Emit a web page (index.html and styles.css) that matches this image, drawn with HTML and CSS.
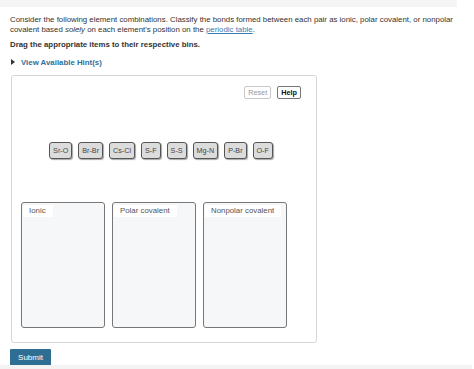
FILE: index.html
```html
<!DOCTYPE html>
<html lang="en">
<head>
    <meta charset="UTF-8">
    <title>Classify the bonds</title>
    <link rel="stylesheet" href="styles.css">
</head>
<body>
    <div class="top-band"></div>

    <div class="question">
        <p class="prompt">Consider the following element combinations. Classify the bonds formed between each pair as ionic, polar covalent, or nonpolar covalent based <em>solely</em> on each element's position on the <a href="#">periodic table</a>.</p>
        <p class="instruction">Drag the appropriate items to their respective bins.</p>

        <div class="hint">
            <span class="hint-arrow"></span>
            <span>View Available Hint(s)</span>
        </div>

        <div class="panel">
            <div class="panel-tools">
                <button class="tool-btn reset">Reset</button>
                <button class="tool-btn help">Help</button>
            </div>

            <div class="tokens">
                <span class="token">Sr-O</span>
                <span class="token">Br-Br</span>
                <span class="token">Cs-Cl</span>
                <span class="token">S-F</span>
                <span class="token">S-S</span>
                <span class="token">Mg-N</span>
                <span class="token">P-Br</span>
                <span class="token">O-F</span>
            </div>

            <div class="bins">
                <div class="bin"><span class="bin-label">Ionic</span></div>
                <div class="bin"><span class="bin-label">Polar covalent</span></div>
                <div class="bin"><span class="bin-label">Nonpolar covalent</span></div>
            </div>
        </div>

        <button class="submit">Submit</button>
    </div>

    <div class="bottom-band"></div>
</body>
</html>
```

FILE: styles.css
```css
* {
    margin: 0;
    padding: 0;
    box-sizing: border-box;
}

body {
    font-family: "Liberation Sans", Arial, sans-serif;
    font-size: 7.85px;
    color: #333;
    background: #fff;
    width: 474px;
    height: 369px;
    overflow: hidden;
}

.top-band {
    width: 457px;
    height: 7px;
    background: #f5f5f5;
}

.question {
    padding: 8px 10px 0 10px;
}

.prompt {
    line-height: 10px;
    width: 454px;
}

.prompt a {
    color: #3a7db5;
    text-decoration: underline;
}

.instruction {
    font-weight: bold;
    margin-top: 5px;
    line-height: 10px;
}

.hint {
    display: flex;
    align-items: center;
    margin-top: 7px;
    height: 10px;
    color: #2f6f99;
    font-weight: bold;
}

.hint-arrow {
    width: 0;
    height: 0;
    border-left: 4px solid #333;
    border-top: 3px solid transparent;
    border-bottom: 3px solid transparent;
    margin-right: 6px;
    margin-left: 1px;
}

.panel {
    margin-top: 8px;
    margin-left: 1px;
    width: 306px;
    height: 268px;
    border: 1px solid #d6d6d6;
    border-radius: 3px;
    padding: 10px 10px 0 9px;
}

.panel-tools {
    display: flex;
    justify-content: flex-end;
    gap: 6px;
    padding-right: 5px;
}

.tool-btn {
    font-family: inherit;
    font-size: 7.3px;
    background: #fff;
    height: 13px;
    padding: 0 3px;
    border-radius: 2px;
}

.reset {
    color: #999;
    border: 1px solid #c8c8c8;
}

.help {
    color: #111;
    font-weight: bold;
    border: 1px solid #777;
}

.tokens {
    display: flex;
    justify-content: center;
    gap: 6px;
    margin-top: 43px;
    padding-right: 5px;
}

.token {
    display: inline-block;
    height: 17px;
    line-height: 15px;
    padding: 0 3px;
    background: #dcdcdc;
    border: 1px solid #555;
    border-radius: 3px;
    box-shadow: 1px 1px 1px rgba(0, 0, 0, 0.35);
    color: #444;
    font-size: 7.2px;
}

.bins {
    display: flex;
    gap: 7px;
    margin-top: 43px;
}

.bin {
    width: 84px;
    height: 126px;
    background: #f6f7f9;
    border: 1px solid #777;
    border-radius: 3px;
    padding: 2px 1px;
}

.bin-label {
    display: inline-block;
    background: #fff;
    color: #555;
    font-size: 7.85px;
    padding: 1px 7px 2px 6px;
}

.submit {
    margin-top: 6px;
    font-family: inherit;
    font-size: 8px;
    color: #fff;
    background: #2f6e93;
    border: none;
    border-radius: 1px;
    width: 41px;
    height: 17px;
}

.bottom-band {
    position: absolute;
    left: 0;
    top: 365px;
    width: 472px;
    height: 4px;
    background: #f3f3f3;
}
```
